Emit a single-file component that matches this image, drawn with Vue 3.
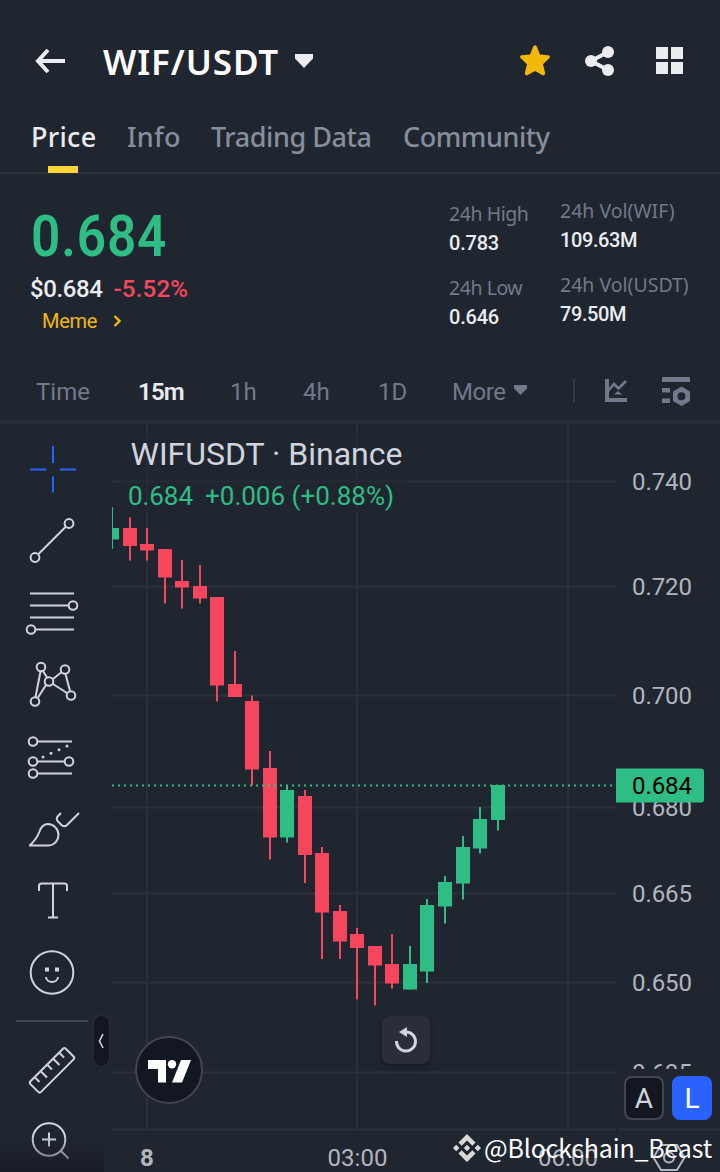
<script setup>
import { ref } from 'vue';

const tabs = [
    { key: 'price', label: 'Price' },
    { key: 'info', label: 'Info' },
    { key: 'trading', label: 'Trading Data' },
    { key: 'community', label: 'Community' },
];
const activeTab = ref('price');

const stats = [
    { key: 'high', label: '24h High', value: '0.783' },
    { key: 'vol-base', label: '24h Vol(WIF)', value: '109.63M' },
    { key: 'low', label: '24h Low', value: '0.646' },
    { key: 'vol-quote', label: '24h Vol(USDT)', value: '79.50M' },
];

const intervals = ['Time', '15m', '1h', '4h', '1D'];
const activeInterval = ref('15m');

// center, high, body top, body bottom, low, rising
const candles = [
    [130, 517.5, 528, 546, 560.5, false],
    [147, 528, 544, 550.5, 560.5, false],
    [165, 549, 549, 577.5, 603.5, false],
    [182, 560, 581, 587.5, 608.5, false],
    [200, 565, 586, 598.5, 603.5, false],
    [217, 597, 597, 685.5, 701.5, false],
    [235, 651, 684, 697, 697, false],
    [252, 695.5, 701, 769.5, 785.5, false],
    [270, 751, 768, 837.5, 859.5, false],
    [287, 785, 790, 837.5, 842.5, true],
    [305, 790, 796, 855, 883, false],
    [322, 847, 853, 912.5, 959, false],
    [340, 905, 911, 941.5, 959, false],
    [357, 928, 934, 948, 999.5, false],
    [375, 946, 946, 965.5, 1005.5, false],
    [392, 934, 964, 983.5, 988.5, false],
    [410, 946, 964, 989.5, 989.5, true],
    [427, 899, 905, 971.5, 983, true],
    [445, 876, 882, 906.5, 923.5, true],
    [463, 836, 847, 883.5, 899.5, true],
    [480, 807, 819, 848.5, 853.5, true],
    [498, 785, 785, 820, 830.5, true],
];

const levels = [
    { y: 482, label: '0.740' },
    { y: 587, label: '0.720' },
    { y: 696, label: '0.700' },
    { y: 808, label: '0.680' },
    { y: 894, label: '0.665' },
    { y: 983, label: '0.650' },
];
const gridX = [147, 357, 568];
</script>

<template>
    <main class="screen">
        <header class="topbar">
            <svg class="back" viewBox="0 0 30 26" width="30" height="26">
                <path d="M13 2L3 13l10 11M3 13h27" />
            </svg>
            <h1 class="pair">WIF/USDT</h1>
            <svg class="pair-caret" viewBox="0 0 18 14" width="18" height="14"><path d="M0 0h18v4.500L9 14 0 4.500z" /></svg>
            <svg class="star" viewBox="0 0 30 31" width="30" height="31">
                <path d="M13.300 1.200Q15 -.8 16.700 1.200L20 9.400l8.700.8q2.100 1.300.6 3L23 19.300l2.200 9q-.3 2.500-2.600 2L15 26l-7.600 4.300q-2.400.5-2.600-2L7 19.300.7 13.200q-1.500-1.700.6-3L10 9.400z" />
            </svg>
            <svg class="share" viewBox="0 0 30 32" width="30" height="32">
                <path d="M23 7L6 16l17 9" />
                <circle cx="23" cy="7" r="6" /><circle cx="6" cy="16" r="6" /><circle cx="23" cy="25" r="6" />
            </svg>
            <svg class="grid-icon" viewBox="0 0 27 27" width="27" height="27">
                <path d="M0 0h12v12H0zM15 0h12v12H15zM0 15h12v12H0zM15 15h12v12H15z" />
            </svg>
        </header>

        <nav class="tabs">
            <button
                v-for="tab in tabs"
                :key="tab.key"
                type="button"
                class="tab"
                :class="[tab.key, { active: activeTab === tab.key }]"
                @click="activeTab = tab.key"
            >{{ tab.label }}</button>
        </nav>

        <section class="ticker">
            <div class="quote">
                <strong class="last">0.684</strong>
                <p class="fiat"><span class="usd">$0.684</span><span class="change">-5.52%</span></p>
                <p class="tag">Meme<svg viewBox="0 0 8 12" width="8" height="12"><path d="M1.500 1l5 5-5 5" /></svg></p>
            </div>
            <dl class="stats">
                <div v-for="stat in stats" :key="stat.key" class="stat" :class="stat.key">
                    <dt>{{ stat.label }}</dt>
                    <dd>{{ stat.value }}</dd>
                </div>
            </dl>
        </section>

        <nav class="intervals">
            <button
                v-for="item in intervals"
                :key="item"
                type="button"
                class="interval"
                :class="['i-' + item, { active: activeInterval === item }]"
                @click="activeInterval = item"
            >{{ item }}</button>
            <button type="button" class="interval more">More</button>
            <svg class="more-caret" viewBox="0 0 13 10" width="13" height="10"><path d="M0 0h13v3.500L6.500 10 0 3.500z" /></svg>
            <i class="bar"></i>
            <svg class="indicator" viewBox="0 0 22 23" width="22" height="23">
                <path class="line" d="M2 0v21h20" />
                <path class="thin" d="M3 12l6-7 4.500 4.500L21 2" />
                <path d="M9 15.500l4-3.500 4 3.500z" />
            </svg>
            <svg class="settings" viewBox="0 0 28 29" width="28" height="29">
                <path d="M0 0h28v5H0zM0 11h8v4.500H0zM0 21.500h8V26H0z" />
                <path fill-rule="evenodd" d="M19.500 9.500l8.500 5v9.500l-8.500 5-8.500-5v-9.500zM19.500 15.200a4 4 0 1 0 0 8 4 4 0 0 0 0-8z" />
            </svg>
        </nav>

        <section class="workspace">
            <aside class="tools">
                <svg class="tool selected" viewBox="0 0 104 72"><path d="M53 13v17M53 43.500v16M30 36.500h16M60 36.500h16" /></svg>
                <svg class="tool" viewBox="0 0 104 72">
                    <path d="M38.500 49l27-27" /><circle cx="69" cy="18.500" r="4.400" /><circle cx="35" cy="52.500" r="4.400" />
                </svg>
                <svg class="tool" viewBox="0 0 104 72">
                    <path d="M30 16.500h44M30 28.500h38.500M30 40.500h44M35.500 52.500H74" />
                    <circle cx="73" cy="28.500" r="4.300" /><circle cx="31" cy="52.500" r="4.300" />
                </svg>
                <svg class="tool" viewBox="0 0 104 72">
                    <path d="M40.500 22.500L35.500 48M43 22l4 6.500M46 36l-8 12.500M53 30l8-6.500M53 35l14 9M65.500 25l4.500 17" />
                    <circle cx="41" cy="18" r="4.300" /><circle cx="65" cy="20.500" r="4.300" /><circle cx="49" cy="32.500" r="4.300" />
                    <circle cx="35" cy="52.500" r="4.300" /><circle cx="71" cy="46.500" r="4.300" />
                </svg>
                <svg class="tool" viewBox="0 0 104 72">
                    <path d="M37.500 20.500H72M37.500 40.500h27M37.500 52.500H72" />
                    <circle cx="33" cy="20.500" r="4.300" /><circle cx="33" cy="40.500" r="4.300" /><circle cx="69" cy="40.500" r="4.300" /><circle cx="33" cy="52.500" r="4.300" />
                    <path class="dots" d="M43 36h.01M51 32.300h.01M59 28.700h.01M67 25h.01" />
                </svg>
                <svg class="tool" viewBox="0 0 104 72">
                    <path d="M29 52.500h20c5.500-.5 9.500-5 9.500-10.500S54 31 47.500 31c-4 .3-6.500 3-8 7.500C37.500 44 33 49.500 29.500 52.500M61 20l-3 3q-2.500 3 0 5.500l3.500 3.500q3 2.500 5.500 0L79 20" />
                </svg>
                <svg class="tool" viewBox="0 0 104 72"><path d="M39 26v-5q0-2.500 2.500-2.500h23q2.500 0 2.500 2.500v5M53 18.500v34M48 52.500h10" /></svg>
                <svg class="tool" viewBox="0 0 104 72">
                    <circle cx="52" cy="35.500" r="21.300" /><path d="M46 40c.5 6.500 11.500 6.500 12 0" />
                    <path class="eyes" d="M45 30.500h4v4h-4zM55 30.500h4v4h-4z" />
                </svg>
                <hr>
                <svg class="tool" viewBox="0 0 104 72">
                    <rect x="-25" y="-7.500" width="50" height="15" rx="2" transform="translate(52 36.300) rotate(-45)" />
                    <path d="M59.500 19l4.500 4.500M53.500 25l6 6M47.500 31l4.500 4.500M41 37.500l6 6M35 43.500l4.500 4.500" />
                </svg>
                <svg class="tool" viewBox="0 0 104 72">
                    <circle cx="49" cy="33.500" r="16.300" /><path d="M49 26.500v14M42 33.500h14M61 45l7.500 7.500" />
                </svg>
                <button type="button" class="collapse">
                    <svg viewBox="0 0 6 16" width="6" height="16"><path d="M5 1L1.500 8 5 15" /></svg>
                </button>
            </aside>

            <svg class="chart" viewBox="104 424 616 748" width="616" height="748">
                <clipPath id="scale-clip"><path d="M616 424h104v645H616z" /></clipPath>
                <g class="grid">
                    <path v-for="x in gridX" :key="x" :d="`M${x} 424V1129`" />
                    <path v-for="level in levels" :key="level.y" :d="`M112 ${level.y - .5}H616`" />
                    <path d="M112 1072.500H616M112 1129.500H616M618 1129.500H720" />
                </g>
                <g class="up"><rect x="112" y="507" width="1" height="42" /><rect x="112" y="528" width="7" height="11.500" /></g>
                <g v-for="[x, high, top, bottom, low, rising] in candles" :key="x" :class="rising ? 'up' : 'down'">
                    <rect :x="x - 1" :y="high" width="2" :height="low - high" />
                    <rect :x="x - 7" :y="top" width="14" :height="bottom - top" />
                </g>
                <path class="last-line" d="M112 785.500H614" />

                <rect class="legend-bg" x="120" y="432" width="286" height="80" />
                <text class="symbol" x="130.500" y="465.400" textLength="272">WIFUSDT · Binance</text>
                <text class="delta" x="128" y="505" textLength="65">0.684</text>
                <text class="delta" x="205" y="505" textLength="189">+0.006 (+0.88%)</text>

                <g class="scale" clip-path="url(#scale-clip)">
                    <text v-for="level in levels" :key="level.label" x="632" :y="level.y + 8.400" textLength="60">{{ level.label }}</text>
                    <text x="632" y="1081.400" textLength="60">0.635</text>
                </g>
                <path class="price-tag" d="M616 768.500h85q3 0 3 3v28q0 3-3 3h-85z" />
                <text class="price-text" x="632" y="794.400" textLength="60">0.684</text>

                <g class="time">
                    <text class="day" x="147" y="1165.500">8</text>
                    <text x="357.500" y="1165.500">03:00</text>
                    <text x="568" y="1165.500">06:00</text>
                </g>
                <g class="axis-gear">
                    <path d="M661 1145h16l7.500 12.500-7.500 12.500h-16l-7.500-12.500z" /><circle cx="669" cy="1157.500" r="5" />
                </g>
            </svg>

            <div class="tv-logo">
                <svg viewBox="0 0 44 23" width="44" height="23">
                    <path d="M0 0h18v22.500h-8V9H0zM33 0h10l-9 22.500H24z" /><circle cx="24" cy="4.300" r="4.200" />
                </svg>
            </div>
            <button type="button" class="reset">
                <svg viewBox="0 0 24 26" width="24" height="26">
                    <path class="arc" d="M2.500 14a9.500 9.500 0 1 0 9.500-9" /><path d="M13 0v10L5 5z" />
                </svg>
            </button>
            <div class="modes">
                <button type="button" class="mode">A</button>
                <button type="button" class="mode on">L</button>
            </div>
            <p class="watermark">
                <svg viewBox="0 0 28 28" width="28" height="28">
                    <path d="M14 0l8.500 8.500-3.200 3.200L14 6.400l-5.300 5.300-3.200-3.200zM14 28l-8.500-8.500 3.200-3.200 5.300 5.300 5.300-5.300 3.200 3.200zM14 10.800l3.200 3.200-3.200 3.200-3.200-3.200zM3.200 10.800L6.400 14l-3.200 3.200L0 14zM24.800 10.800L28 14l-3.200 3.200-3.200-3.200z" />
                </svg>
                <span>@Blockchain_Beast</span>
            </p>
        </section>
    </main>
</template>

<style>
body{margin:0;background:#202630}
</style>

<style scoped>
.screen{width:720px;height:1172px;display:flex;flex-direction:column;overflow:hidden;background:#202630;color:#eaecef;font-family:Roboto,"Noto Sans",sans-serif}
.screen *{box-sizing:border-box}
svg{display:block;flex:none}
button{padding:0;border:0;background:none;color:inherit;font:inherit;text-align:left;white-space:nowrap}
p,h1,dl,dd{margin:0}
.topbar{flex:none;display:flex;align-items:center;height:103px;padding:18px 37px 0 35px}
.back{fill:none;stroke:#eaecef;stroke-width:4}
.pair{width:175px;margin-left:38px;padding-top:2px;color:#fff;font-family:"Noto Sans",sans-serif;font-size:35px;font-weight:600;line-height:40px;letter-spacing:.9px;white-space:nowrap}
.pair-caret{margin-left:17px;fill:#eaecef}
.star{margin-left:auto;fill:#f0b90b}
.share{margin-left:35px;fill:#eaecef}
.share path{fill:none;stroke:#eaecef;stroke-width:4}
.grid-icon{margin-left:41px;fill:#eaecef}
.tabs{flex:none;display:flex;gap:32px;height:71px;padding-left:31px;border-bottom:2px solid #2b3039}
.tab{position:relative;height:69px;padding-bottom:3px;color:#848e9c;font-family:"Noto Sans",sans-serif;font-size:27px;font-weight:500}
.tab.price{width:64px;letter-spacing:.3px}
.tab.info{width:52px;letter-spacing:.3px}
.tab.trading{width:160px;letter-spacing:-.45px}
.tab.community{width:146px;letter-spacing:-.45px}
.tab.active{color:#eaecef}
.tab.active::after{content:"";position:absolute;left:17px;bottom:-1px;width:30px;height:7px;background:#fcd535}
.ticker{flex:none;display:flex;justify-content:space-between;height:186px;padding:26px 31px 0 31px}
.last{display:block;width:150px;height:68px;color:#2ebd85;font-size:57px;font-weight:600;line-height:73px;letter-spacing:1px;transform:scaleX(.9);transform-origin:0 0}
.fiat{display:flex;gap:11px;height:38px;font-size:24px;font-weight:500;line-height:43px;letter-spacing:-.4px}
.usd{margin-left:-1px}
.change{color:#f6465d;letter-spacing:.2px}
.tag{display:flex;align-items:center;gap:16px;padding-left:11px;color:#f0b90b;font-size:20px;line-height:30px;letter-spacing:-.3px}
.tag svg{fill:none;stroke:#f0b90b;stroke-width:2.4}
.stats{display:grid;grid-template-columns:111px 129px;grid-auto-rows:74px}
.stat dt{height:29px;color:#707a8a;font-family:"Noto Sans",sans-serif;font-size:19.500px;line-height:27px;letter-spacing:-.45px;white-space:nowrap}
.stat dd{font-size:20px;font-weight:500;line-height:28px;letter-spacing:-.2px}
.stat.vol-base,.stat.vol-quote{margin-top:-3px}
.stat.vol-base dt,.stat.vol-quote dt{letter-spacing:0}
.stat.vol-base dd,.stat.vol-quote dd{letter-spacing:-.4px}
.intervals{flex:none;display:flex;align-items:center;height:64px;padding:0 30px 0 36px;border-bottom:4px solid #262b34}
.interval{padding-top:4px;color:#707a8a;font-size:24px;letter-spacing:0}
.i-Time{width:102px}
.i-15m{width:92px}
.interval.active{color:#eaecef;font-weight:600;letter-spacing:-.8px}
.i-1h{width:73px}
.i-4h{width:75px}
.i-1D{width:74px}
.more{width:62px;letter-spacing:-.4px}
.more-caret{margin-top:-1px;fill:#707a8a}
.bar{width:2px;height:24px;margin-left:46px;background:#343a44}
.indicator{margin-left:30px;fill:#707a8a}
.indicator .line{fill:none;stroke:#707a8a;stroke-width:4}
.indicator .thin{fill:none;stroke:#707a8a;stroke-width:2.6}
.settings{margin-top:2px;margin-left:auto;fill:#707a8a}
.workspace{position:relative;flex:1;display:flex;min-height:0;overflow:hidden}
.tools{position:relative;flex:none;width:104px;padding-top:9px}
.tools::after{content:"";position:absolute;left:0;right:0;bottom:0;height:36px;background:linear-gradient(rgba(19,23,34,0),rgba(19,23,34,.7))}
.tool{width:104px;height:72px;fill:none;stroke:#d1d4dc;stroke-width:2}
.tool.selected{stroke:#2962ff}
.tool .dots{stroke-width:3;stroke-linecap:round}
.tool .eyes{fill:#d1d4dc;stroke:none}
.tools hr{width:72px;height:2px;margin:11px 0 12px 16px;border:0;background:#434651}
.collapse{position:absolute;left:92.500px;top:591px;z-index:1;display:grid;place-items:center;width:17px;height:52px;border:1px solid #2a2e39;border-radius:8px;background:#131722}
.collapse svg{fill:none;stroke:#d1d4dc;stroke-width:1.6}
.chart{font-family:Roboto,sans-serif}
.grid{fill:none;stroke:#2b3039;stroke-width:2}
.up{fill:#2ebd85}
.down{fill:#f6465d}
.last-line{fill:none;stroke:#2ebd85;stroke-width:2;stroke-dasharray:2 4}
.legend-bg{fill:#202630;opacity:.5}
.symbol{fill:#d1d4dc;font-size:32px}
.delta{fill:#2ebd85;font-size:26px}
.scale{fill:#b2b5be;font-size:24px}
.price-tag{fill:#2ebd85}
.price-text{fill:#000;font-size:24px}
.time{fill:#b2b5be;font-size:24px;text-anchor:middle}
.day{font-weight:700}
.axis-gear{fill:none;stroke:#b2b5be;stroke-width:2}
.tv-logo{position:absolute;left:135px;top:612px;display:grid;place-items:center;width:68px;height:68px;border:2px solid #434651;border-radius:50%;background:#131722}
.tv-logo svg{margin:2px 0 0 2px;fill:#fff}
.reset{position:absolute;left:382px;top:592px;display:grid;place-items:center;width:48px;height:48px;border-radius:8px;background:#2a2e39;box-shadow:0 3px 7px rgba(0,0,0,.3)}
.reset svg{fill:#d1d4dc}
.reset .arc{fill:none;stroke:#d1d4dc;stroke-width:3}
.modes{position:absolute;right:8px;top:652px;display:flex;gap:8px}
.mode{width:40px;height:44px;border:2px solid #434651;border-radius:8px;background:#131722;color:#d1d4dc;font-size:28px;line-height:42px;text-align:center}
.mode.on{border-color:#2962ff;background:#2962ff;color:#fff}
.watermark{position:absolute;left:453px;top:705px;display:flex;align-items:center;gap:3px;height:38px;color:#fff;font-family:"Noto Sans CJK SC",sans-serif;font-size:25px;line-height:38px;letter-spacing:-.18px;white-space:nowrap}
.watermark svg{fill:#d9d9d9}
.watermark span{margin-top:-3px}
</style>
